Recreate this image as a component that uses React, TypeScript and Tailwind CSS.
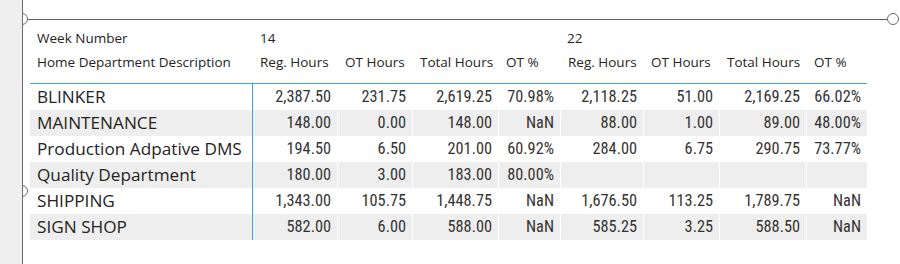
import React from "react";

const colW = [
  "w-[84px]",
  "w-[75px]",
  "w-[86px]",
  "w-[62px]",
  "w-[83px]",
  "w-[76px]",
  "w-[87px]",
  "w-[61px]",
];

const labels = [
  "Reg. Hours",
  "OT Hours",
  "Total Hours",
  "OT %",
  "Reg. Hours",
  "OT Hours",
  "Total Hours",
  "OT %",
];

const rows: string[][] = [
  ["BLINKER", "2,387.50", "231.75", "2,619.25", "70.98%", "2,118.25", "51.00", "2,169.25", "66.02%"],
  ["MAINTENANCE", "148.00", "0.00", "148.00", "NaN", "88.00", "1.00", "89.00", "48.00%"],
  ["Production Adpative DMS", "194.50", "6.50", "201.00", "60.92%", "284.00", "6.75", "290.75", "73.77%"],
  ["Quality Department", "180.00", "3.00", "183.00", "80.00%", "", "", "", ""],
  ["SHIPPING", "1,343.00", "105.75", "1,448.75", "NaN", "1,676.50", "113.25", "1,789.75", "NaN"],
  ["SIGN SHOP", "582.00", "6.00", "588.00", "NaN", "585.25", "3.25", "588.50", "NaN"],
];

const headFont = { fontFamily: '"Open Sans", "Noto Sans", sans-serif' };

const Handle = ({ className }: { className: string }) => (
  <div className={`absolute w-[12px] h-[12px] rounded-full border border-[#6b6b6b] bg-white ${className}`} />
);

export default function App() {
  return (
    <div className="w-[900px] h-[264px] flex bg-white overflow-hidden">
      <div className="w-[23px] h-full bg-[#efefef] border-r border-[#6b6b6b] shrink-0" />
      <div className="relative flex-1 h-full overflow-hidden">
        <div className="pt-[19px]">
          <div className="border-t border-[#5f5f5f] mr-[13px]" />
        </div>
        <div className="pl-[7px] pt-[6px] text-[#252423]" style={headFont}>
          <div className="flex h-[24px] items-center text-[13.5px] leading-[20px]">
            <div className="w-[223px] pl-[7px]">Week Number</div>
            <div className="w-[307px] pl-[7px]">14</div>
            <div className="w-[307px] pl-[7px]">22</div>
          </div>
          <div className="flex w-[837px] h-[34px] pt-[2px] text-[13.5px] leading-[20px] border-b border-[#3f9ef2]">
            <div className="w-[223px] pl-[7px]">Home Department Description</div>
            {labels.map((l, i) => (
              <div key={"h" + i} className={`${colW[i]} pl-[7px] ${i > 0 ? "border-l border-white" : ""}`}>
                {l}
              </div>
            ))}
          </div>
          {rows.map((r, ri) => (
            <div
              key={"r" + ri}
              className={`flex w-[837px] h-[26px] ${ri % 2 === 1 ? "bg-[#eeeeee]" : "bg-white"}`}
            >
              <div className="w-[223px] h-full flex items-center pl-[7px] border-r border-[#3f9ef2] text-[17.2px] whitespace-nowrap">
                {r[0]}
              </div>
              {r.slice(1).map((v, i) => (
                <div
                  key={"c" + i}
                  className={`${colW[i]} h-full flex items-center justify-end pr-[6px] text-[16.3px] text-[#333333] ${i > 0 ? "border-l border-white" : ""}`}
                  style={{ fontFamily: '"Liberation Sans Narrow", "Arial Narrow", "Roboto Condensed", "Liberation Sans", sans-serif' }}
                >
                  {v}
                </div>
              ))}
            </div>
          ))}
        </div>
        <Handle className="left-[-7px] top-[13px]" />
        <Handle className="left-[-7px] top-[185px]" />
        <Handle className="left-[864px] top-[13px]" />
      </div>
    </div>
  );
}
